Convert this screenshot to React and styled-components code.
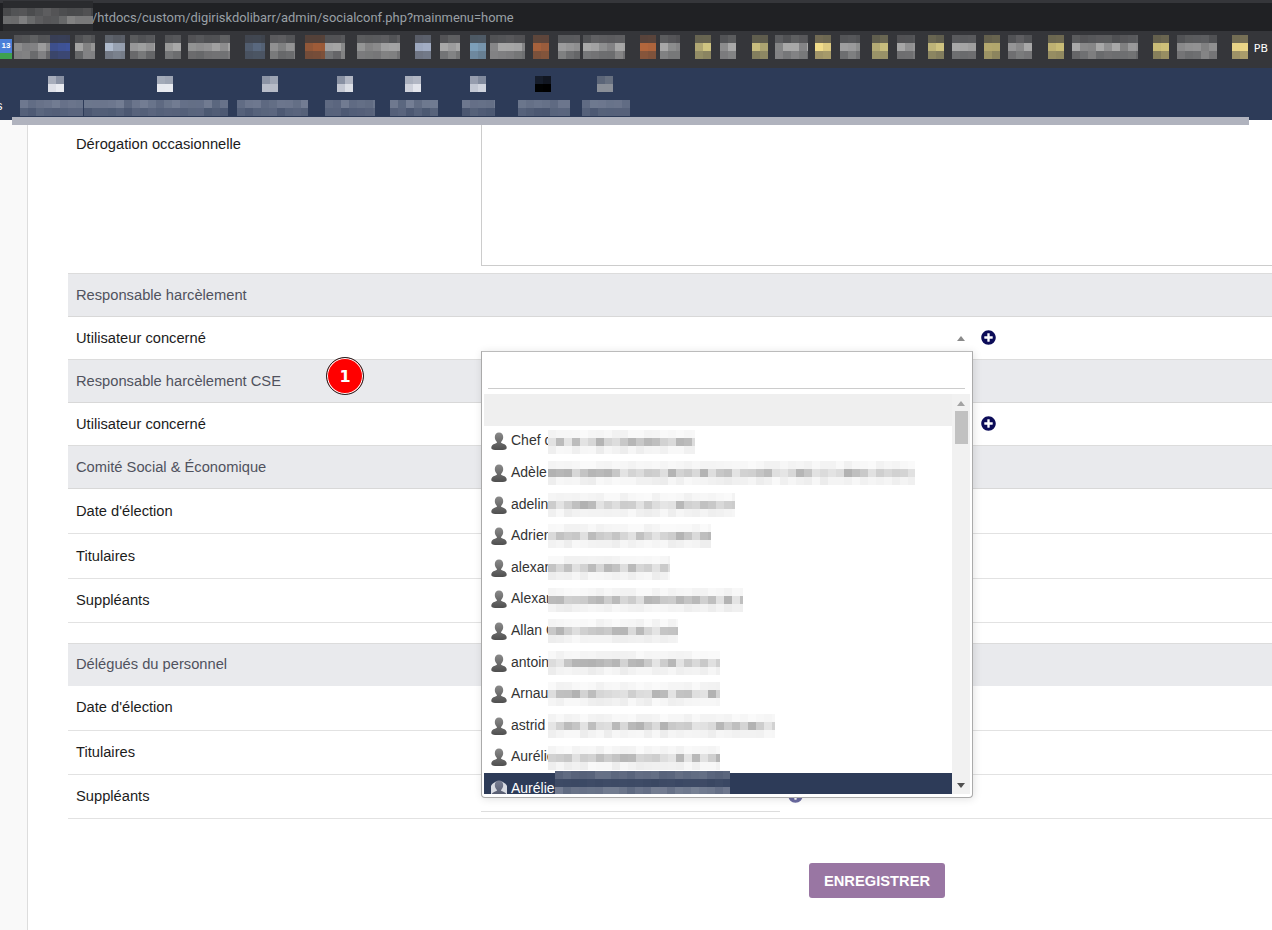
import React from "react";
import styled, { createGlobalStyle } from "styled-components";
import { FaPlusCircle } from "react-icons/fa";

const Global = createGlobalStyle`
  html, body { margin: 0; padding: 0; background: #fff; }
  body { font-family: "Liberation Sans", Arial, sans-serif; overflow: hidden; }
  * { box-sizing: border-box; }
`;

/* ---------- pixelated (redacted) blocks ---------- */
const hex = (c) => [1, 3, 5].map((i) => parseInt(c.slice(i, i + 2), 16));
const mix = (a, b, t) => {
  const k = Math.max(0, Math.min(1, t));
  const A = hex(a), B = hex(b);
  return `rgb(${A.map((v, i) => Math.round(v + (B[i] - v) * k)).join(",")})`;
};
const rng = (seed) => {
  let s = seed * 9301 + 49297;
  return () => {
    s = (s * 16807) % 2147483647;
    return (s % 1000) / 1000;
  };
};

const MosaicSvg = styled.svg`
  display: block;
  flex: none;
`;

function Mosaic({ width, bands, bg, fg, seed = 1, cw = 8, ch = 8, spread = 0.7 }) {
  const r = rng(seed);
  for (let i = 0; i < 5; i++) r();
  const cols = Math.ceil(width / cw);
  const rects = [];
  bands.forEach((b, y) => {
    for (let x = 0; x < cols; x++) {
      const t = b * (1 - spread / 2 + r() * spread);
      rects.push(
        <rect key={`${x}-${y}`} x={x * cw} y={y * ch} width={cw} height={ch} fill={mix(bg, fg, t)} />
      );
    }
  });
  return (
    <MosaicSvg width={width} height={bands.length * ch} shapeRendering="crispEdges" aria-hidden="true">
      {rects}
    </MosaicSvg>
  );
}

/* ---------- browser chrome ---------- */
const TopEdge = styled.div`
  height: 3px;
  background: #35363a;
`;
const UrlBar = styled.div`
  position: relative;
  height: 28px;
  background: #202124;
  display: flex;
  align-items: center;
  padding-left: 92px;
`;
const UrlText = styled.span`
  font: 12.9px Roboto, "Liberation Sans", sans-serif;
  color: #9aa0a6;
  white-space: nowrap;
`;
const UrlBlur = styled.div`
  position: absolute;
  left: 3px;
  top: -2px;
  width: 90px;
  height: 32px;
  background: #2a2b2e;
  padding-top: 7px;
  overflow: hidden;
`;
const Bookmarks = styled.div`
  height: 37px;
  background: #35363a;
  display: flex;
  align-items: flex-start;
  padding-top: 4px;
  position: relative;
`;
const BookmarkItem = styled.div`
  margin-left: ${(p) => p.$gap}px;
  flex: none;
`;
const CalendarIcon = styled.div`
  width: 12px;
  height: 20px;
  margin-top: 4px;
  background: linear-gradient(#4a7fd8 0 70%, #3ea04f 70% 100%);
  color: #fff;
  font: 700 8px/14px "Liberation Sans", sans-serif;
  text-align: center;
  flex: none;
`;
const Profile = styled.span`
  position: absolute;
  right: 4px;
  top: 11px;
  font: 11px/14px "DejaVu Sans", sans-serif;
  color: #fff;
`;

/* ---------- application nav ---------- */
const Nav = styled.nav`
  position: relative;
  height: 52px;
  background: #2d3b58;
  display: flex;
  align-items: flex-start;
  padding-top: 8px;
`;
const NavEdge = styled.span`
  position: absolute;
  left: -4px;
  top: 30px;
  font: 13px/16px "Liberation Sans", sans-serif;
  color: #fff;
`;
const NavItem = styled.div`
  flex: none;
  margin-left: ${(p) => p.$gap}px;
  display: flex;
  flex-direction: column;
  gap: 8px;
`;
const NavIcon = styled.div`
  margin-left: ${(p) => p.$offset}px;
`;
const NavShade = styled.div`
  position: absolute;
  left: 12px;
  top: 49px;
  width: 1237px;
  height: 8px;
  background: #b0b3be;
  z-index: 5;
`;

/* ---------- page ---------- */
const Body = styled.div`
  display: flex;
  height: 810px;
  overflow: hidden;
`;
const Side = styled.aside`
  width: 28px;
  flex: none;
  background: #f9f9f9;
  border-right: 1px solid #ddd;
`;
const Content = styled.main`
  flex: 1;
  min-width: 0;
  padding-left: 40px;
`;
const Row = styled.div`
  display: grid;
  grid-template-columns: 413px 1fr;
  align-items: center;
  height: ${(p) => p.$h}px;
  border-bottom: 1px solid ${(p) => (p.$plain ? "#e2e2e2" : "#dcdcdc")};
`;
const HeadRow = styled(Row)`
  background: #e9eaed;
  border-top: ${(p) => (p.$top ? "1px solid #dcdcdc" : "0")};
  border-bottom: ${(p) => (p.$flat ? "0" : "1px solid #d8d8d8")};
`;
const Label = styled.div`
  padding-left: 8px;
  padding-bottom: ${(p) => (p.$raised ? "2px" : "0")};
  font-size: 14.7px;
  line-height: 18px;
  color: #1c1c1c;
`;
const HeadLabel = styled(Label)`
  color: #50525e;
`;
const NoteRow = styled.div`
  display: grid;
  grid-template-columns: 413px 1fr;
  height: 153px;
`;
const NoteLabel = styled(Label)`
  padding-top: 15px;
`;
const NoteBox = styled.div`
  height: 146px;
  border-left: 1px solid #ccc;
  border-bottom: 1px solid #ccc;
`;
const Spacer = styled.div`
  height: 20px;
`;
const Field = styled.div`
  position: relative;
  display: flex;
  align-items: center;
  height: 100%;
`;
const SelectBox = styled.div`
  width: ${(p) => p.$w}px;
  height: 30px;
  flex: none;
  display: flex;
  align-items: center;
  justify-content: flex-end;
  padding-right: ${(p) => (p.$arrow ? "6px" : "0")};
  border-bottom: ${(p) => (p.$line ? "1px solid #ddd" : "0")};
`;
const CaretUp = styled.span`
  width: 0;
  height: 0;
  border-left: 4px solid transparent;
  border-right: 4px solid transparent;
  border-bottom: 5px solid #8a8a8a;
`;
const AddIcon = styled(FaPlusCircle)`
  color: ${(p) => p.$color};
  font-size: 15px;
  margin-left: ${(p) => p.$gap}px;
  margin-bottom: 2px;
  flex: none;
`;
const Footer = styled.div`
  padding: 44px 0 0 741px;
`;
const SaveButton = styled.button`
  width: 136px;
  height: 35px;
  border: 0;
  border-radius: 3px;
  background: #9976a3;
  color: #fff;
  font: 700 14.7px "Liberation Sans", Arial, sans-serif;
  padding: 0;
`;
const Badge = styled.div`
  position: absolute;
  left: 326px;
  top: 357px;
  width: 38px;
  height: 38px;
  border-radius: 50%;
  background: #f00;
  border: 1px solid #222;
  box-shadow: inset 0 0 0 1px #fff;
  color: #fff;
  display: flex;
  align-items: center;
  justify-content: center;
  font: 700 16px "DejaVu Sans", sans-serif;
  z-index: 6;
`;

/* ---------- dropdown ---------- */
const Popup = styled.div`
  position: absolute;
  left: 0;
  top: 34px;
  width: 492px;
  height: 447px;
  background: #fff;
  border: 1px solid #aaa;
  border-top-color: #bbb;
  border-radius: 0 0 4px 4px;
  box-shadow: 1px 1px 8px rgba(0, 0, 0, 0.12);
  padding: 0 2px;
  z-index: 4;
`;
const SearchWrap = styled.div`
  padding: 0 5px 0 4px;
  height: 42px;
`;
const SearchInput = styled.input`
  display: block;
  width: 100%;
  height: 37px;
  border: 0;
  border-bottom: 1px solid #ccc;
  outline: 0;
  background: transparent;
`;
const ListArea = styled.div`
  display: flex;
  height: 400px;
  overflow: hidden;
`;
const Options = styled.div`
  width: 468px;
  flex: none;
  overflow: hidden;
`;
const Blank = styled.div`
  height: 31.6px;
  background: #efefef;
`;
const Option = styled.div`
  position: relative;
  height: 31.6px;
  display: flex;
  align-items: center;
  gap: 4px;
  padding-left: 7px;
  font-size: 14px;
  white-space: nowrap;
  color: ${(p) => (p.$active ? "#fff" : "#333")};
  background: ${(p) => (p.$active ? "#2d3b58" : "#fff")};
`;
const OptionName = styled.span`
  padding-bottom: 2px;
`;
const OptionBlur = styled.div`
  position: absolute;
  left: ${(p) => p.$left}px;
  top: ${(p) => p.$top}px;
`;
const Scrollbar = styled.div`
  width: 18px;
  flex: none;
  background: #f1f1f1;
  display: flex;
  flex-direction: column;
  align-items: center;
  padding-top: 7px;
  position: relative;
`;
const ScrollUp = styled(CaretUp)`
  border-bottom-color: #a3a3a3;
`;
const Thumb = styled.div`
  width: 13px;
  height: 33px;
  margin-top: 5px;
  background: #c1c1c1;
`;
const ScrollDown = styled.span`
  position: absolute;
  bottom: 6px;
  width: 0;
  height: 0;
  border-left: 4px solid transparent;
  border-right: 4px solid transparent;
  border-top: 5px solid #505050;
`;

function Avatar({ light, id }) {
  return (
    <svg width="16" height="18" viewBox="0 0 16 18" style={{ flex: "none" }} aria-hidden="true">
      <defs>
        <linearGradient id={id} x1="0" y1="0" x2="0" y2="1">
          <stop offset="0" stopColor={light ? "#7a8094" : "#8a8a8a"} />
          <stop offset="1" stopColor={light ? "#4c5266" : "#4f4f4f"} />
        </linearGradient>
      </defs>
      {light && <circle cx="8" cy="10" r="9" fill="#d8dbe2" />}
      <path
        fill={`url(#${id})`}
        d="M8 0.5c2.6 0 4.2 2 4.2 4.6 0 2-.9 3.6-1.9 4.6-.4.4-.3 1.1.2 1.4 2 .9 4.5 1.4 5 3.4.3 1.2.3 2.2-.6 2.7-1.6.7-4 .8-6.9.8s-5.3-.1-6.9-.8c-.9-.5-.9-1.5-.6-2.7.5-2 3-2.5 5-3.4.5-.3.6-1 .2-1.4C4.700 8.700 3.800 7.100 3.800 5.100 3.800 2.500 5.400.5 8 .5z"
      />
    </svg>
  );
}

const PEOPLE = [
  ["Chef d", 695],
  ["Adèle", 915],
  ["adelin", 735],
  ["Adrien", 711],
  ["alexan", 670],
  ["Alexan", 743],
  ["Allan G", 678],
  ["antoine", 720],
  ["Arnaud", 720],
  ["astrid", 775],
  ["Aurélie", 720],
];

const BOOKMARKS = [
  [14, 36, 0.4], [50, 20, 0.5, "#3f55a0"], [75, 20, 0.45], [105, 20, 0.8, "#b8c4d8"], [130, 25, 0.35],
  [165, 16, 0.8], [188, 42, 0.5], [245, 20, 0.2, "#5a6a80"], [270, 25, 0.35],
  [305, 20, 0.9, "#a85f38"], [325, 20, 0.35], [357, 43, 0.6], [415, 16, 0.8, "#a8b4cc"], [440, 20, 0.4],
  [470, 16, 1, "#8fb8d8"], [490, 35, 0.4], [533, 16, 1, "#b8683c"], [558, 22, 0.5], [583, 42, 0.6],
  [640, 16, 1, "#b8683c"], [660, 20, 0.5], [695, 16, 1, "#d6ca84"], [720, 16, 0.7], [752, 16, 1, "#d6ca84"],
  [775, 33, 0.6], [815, 16, 1, "#f6e08c"], [840, 20, 0.5], [872, 16, 1, "#d6ca84"], [897, 18, 0.6],
  [928, 16, 1, "#d6ca84"], [952, 24, 0.8], [984, 16, 1, "#e0d080"], [1008, 24, 0.6],
  [1048, 16, 1, "#e0d080"], [1072, 66, 0.5], [1153, 16, 1, "#e0d080"], [1177, 40, 0.6], [1232, 16, 1, "#f6e08c"],
];

const NAV = [
  [20, 63, 28, "#e8eaf0"], [84, 144, 73, "#e8eaf0"], [237, 71, 25, "#e8eaf0"], [325, 50, 12, "#e8eaf0"],
  [390, 48, 15, "#e8eaf0"], [462, 33, 8, "#d0d4de"], [518, 52, 17, "#000000"], [582, 48, 15, "#8a8f98"],
];

function withGaps(list) {
  let prev = 0;
  return list.map((item) => {
    const gap = item[0] - prev;
    prev = item[0] + item[1];
    return { gap, item };
  });
}

export default function App() {
  return (
    <>
      <Global />
      <TopEdge />
      <UrlBar>
        <UrlBlur>
          <Mosaic width={90} bands={[0.35, 0.6]} bg="#2a2b2e" fg="#9a9a9a" seed={3} />
        </UrlBlur>
        <UrlText>/htdocs/custom/digiriskdolibarr/admin/socialconf.php?mainmenu=home</UrlText>
      </UrlBar>
      <Bookmarks>
        <CalendarIcon>13</CalendarIcon>
        {withGaps(BOOKMARKS.map((b) => [b[0] - 12, b[1], b[2], b[3]])).map(({ gap, item }, i) => (
          <BookmarkItem key={i} $gap={gap}>
            <Mosaic
              width={item[1]}
              bands={[0.3, 0.85, 0.55]}
              bg="#35363a"
              fg={item[3] || "#a8a8a8"}
              seed={i + 11}
              spread={item[3] ? 0.3 : 0.5}
            />
          </BookmarkItem>
        ))}
        <Profile>PB</Profile>
      </Bookmarks>
      <Nav>
        <NavEdge>s</NavEdge>
        {withGaps(NAV).map(({ gap, item }, i) => (
          <NavItem key={i} $gap={gap}>
            <NavIcon $offset={item[2]}>
              <Mosaic width={16} bands={[0.6, 0.95]} bg="#2d3b58" fg={item[3]} seed={i + 40} spread={0.5} />
            </NavIcon>
            <Mosaic width={item[1]} bands={[0.55, 0.35]} bg="#2d3b58" fg="#98a0b2" seed={i + 70} spread={0.45} />
          </NavItem>
        ))}
        <NavShade />
      </Nav>
      <Body>
        <Side />
        <Content>
          <NoteRow>
            <NoteLabel>Dérogation occasionnelle</NoteLabel>
            <NoteBox />
          </NoteRow>
          <HeadRow $h={44} $top>
            <HeadLabel>Responsable harcèlement</HeadLabel>
          </HeadRow>
          <Row $h={43}>
            <Label>Utilisateur concerné</Label>
            <Field>
              <SelectBox $w={490} $arrow>
                <CaretUp />
              </SelectBox>
              <AddIcon $color="#0c0c58" $gap={10} />
              <Popup>
                <SearchWrap>
                  <SearchInput aria-label="Rechercher" />
                </SearchWrap>
                <ListArea>
                  <Options>
                    <Blank />
                    {PEOPLE.map(([name, end], i) => (
                      <Option key={name + i}>
                        <Avatar id={`avatar-${i}`} />
                        <OptionName>{name}</OptionName>
                        <OptionBlur $left={64} $top={4}>
                          <Mosaic
                            width={end - 548}
                            bands={[0.08, 0.45, 0.11]}
                            bg="#ffffff"
                            fg="#8c8c8c"
                            seed={i + 100}
                            spread={1}
                          />
                        </OptionBlur>
                      </Option>
                    ))}
                    <Option $active>
                      <Avatar light id="avatar-active" />
                      <OptionName>Aurélie</OptionName>
                      <OptionBlur $left={71} $top={-2}>
                        <Mosaic width={175} bands={[0.32, 0.1, 0.4]} bg="#2d3b58" fg="#c8ccd6" seed={130} spread={0.4} />
                      </OptionBlur>
                    </Option>
                  </Options>
                  <Scrollbar>
                    <ScrollUp />
                    <Thumb />
                    <ScrollDown />
                  </Scrollbar>
                </ListArea>
              </Popup>
            </Field>
          </Row>
          <HeadRow $h={43}>
            <HeadLabel>Responsable harcèlement CSE</HeadLabel>
          </HeadRow>
          <Row $h={43}>
            <Label>Utilisateur concerné</Label>
            <Field>
              <SelectBox $w={490} />
              <AddIcon $color="#0c0c58" $gap={10} />
            </Field>
          </Row>
          <HeadRow $h={43}>
            <HeadLabel>Comité Social &amp; Économique</HeadLabel>
          </HeadRow>
          <Row $h={45} $plain>
            <Label>Date d'élection</Label>
          </Row>
          <Row $h={45} $plain>
            <Label>Titulaires</Label>
          </Row>
          <Row $h={44} $plain>
            <Label $raised>Suppléants</Label>
          </Row>
          <Spacer />
          <HeadRow $h={43} $top $flat>
            <HeadLabel $raised>Délégués du personnel</HeadLabel>
          </HeadRow>
          <Row $h={45} $plain>
            <Label $raised>Date d'élection</Label>
          </Row>
          <Row $h={44} $plain>
            <Label $raised>Titulaires</Label>
          </Row>
          <Row $h={44} $plain>
            <Label $raised>Suppléants</Label>
            <Field>
              <SelectBox $w={299} $line />
              <AddIcon $color="#6a6aa0" $gap={8} />
            </Field>
          </Row>
          <Footer>
            <SaveButton>ENREGISTRER</SaveButton>
          </Footer>
        </Content>
      </Body>
      <Badge>1</Badge>
    </>
  );
}
